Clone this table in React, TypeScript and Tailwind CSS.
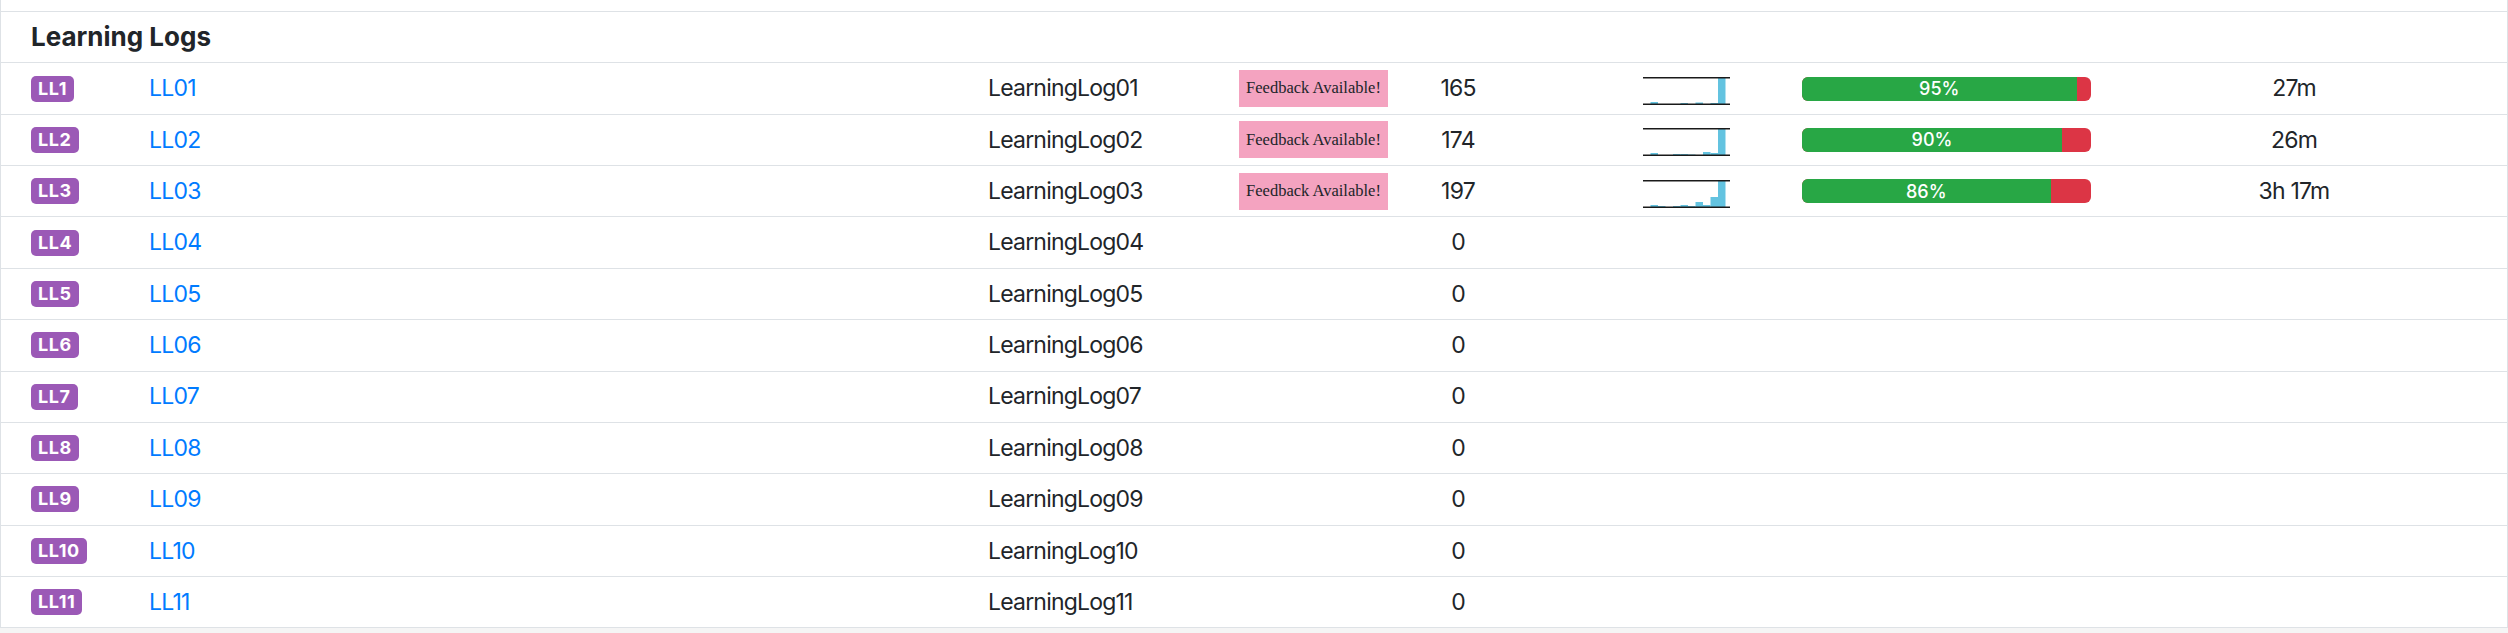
import React from 'react';

const logs = [
  { n: 1, count: 165, pct: 95, time: '27m', bars: [0, 2, 0, 0, 0, 1, 0, 1.5, 0, 1, 26] },
  { n: 2, count: 174, pct: 90, time: '26m', bars: [0, 2, 0, 0, 1, 1, 0.5, 0, 3, 2, 26] },
  { n: 3, count: 197, pct: 86, time: '3h 17m', bars: [0, 2, 1, 0, 1, 2, 1, 5, 2, 10, 26] },
  { n: 4, count: 0 },
  { n: 5, count: 0 },
  { n: 6, count: 0 },
  { n: 7, count: 0 },
  { n: 8, count: 0 },
  { n: 9, count: 0 },
  { n: 10, count: 0 },
  { n: 11, count: 0 },
];

const pad = (n: number) => (n < 10 ? `0${n}` : `${n}`);

const Sparkline = ({ bars }: { bars: number[] }) => (
  <svg width="87" height="28" viewBox="0 0 87 28">
    {bars.map((h, i) =>
      h > 0 ? (
        <rect key={i} x={i * 7.5} y={27 - h} width="7.5" height={h} fill="#5bc0de" fillOpacity="0.95" />
      ) : null
    )}
    <line x1="0" y1="0.75" x2="87" y2="0.75" stroke="#1a1a1a" strokeWidth="1.5" />
    <line x1="0" y1="27.25" x2="87" y2="27.25" stroke="#1a1a1a" strokeWidth="1.5" />
  </svg>
);

export default function App() {
  return (
    <div className="w-[2508px] h-[633px] bg-[#f5f5f5] overflow-hidden font-['Inter','Liberation_Sans',sans-serif] text-[#212529]">
      <div className="bg-white border-x border-b border-[#dee2e6]">
        <div className="h-[11px]" />
        <div className="h-[51.36px] border-t border-[#dee2e6] flex items-center pl-[30px]">
          <div className="text-[26px] leading-none font-bold">Learning Logs</div>
        </div>
        {logs.map((log) => (
          <div key={log.n} className="h-[51.36px] border-t border-[#dee2e6] flex items-center pl-[30px] text-[23px] tracking-[-0.8px]">
            <div className="w-[118px] flex">
              <span className="h-[26px] px-[7px] rounded-[5px] bg-[#9b59b6] text-white text-[18px] tracking-[0.6px] font-bold flex items-center leading-none">
                LL{log.n}
              </span>
            </div>
            <div className="w-[839px] text-[#007bff]">LL{pad(log.n)}</div>
            <div className="w-[251px]">LearningLog{pad(log.n)}</div>
            <div className="w-[149px] tracking-normal">
              {log.pct !== undefined && (
                <div className="h-[37px] bg-[#f4a3c0] flex items-center justify-center font-['Liberation_Serif',serif] text-[16.5px] text-[#212529]">
                  Feedback Available!
                </div>
              )}
            </div>
            <div className="w-[140px] text-center">{log.count}</div>
            <div className="w-[274px] pl-[115px] pt-[5px] flex">
              {log.bars && <Sparkline bars={log.bars} />}
            </div>
            <div className="w-[289px] tracking-normal">
              {log.pct !== undefined && (
                <div className="h-[24px] rounded-[6px] overflow-hidden flex bg-[#dc3545]">
                  <div
                    className="h-full bg-[#28a745] flex items-center justify-center text-white text-[18px] font-medium"
                    style={{ width: `${log.pct}%` }}
                  >
                    {log.pct}%
                  </div>
                </div>
              )}
            </div>
            <div className="w-[406px] text-center">{log.time}</div>
          </div>
        ))}
      </div>
    </div>
  );
}
